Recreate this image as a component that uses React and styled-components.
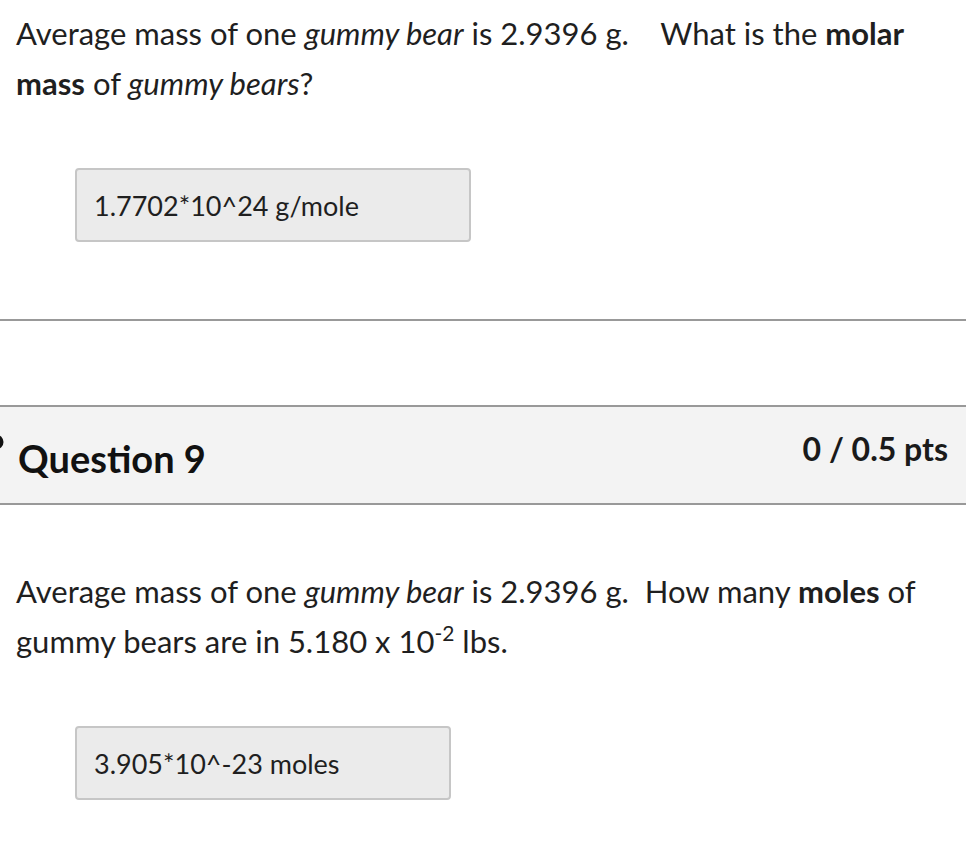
import React from 'react';
import styled, { createGlobalStyle } from 'styled-components';

const GlobalStyle = createGlobalStyle`
  html, body {
    margin: 0;
    padding: 0;
    background: #ffffff;
  }
  body {
    font-family: Lato, 'Noto Sans', sans-serif;
    color: #1f1f1f;
  }
`;

export default function App() {
  return (
    <Page>
      <GlobalStyle />
      <QuestionBody>
        <Prompt>
          Average mass of one <em>gummy bear</em> is 2.9396 g.&nbsp;&nbsp;&nbsp; What is the{' '}
          <strong>molar mass</strong> of <em>gummy bears</em>?
        </Prompt>
        <AnswerBox width={396}>1.7702*10^24 g/mole</AnswerBox>
      </QuestionBody>

      <Divider />

      <QuestionHeader>
        <FlagMark viewBox='0 0 16 16' aria-hidden='true'>
          <circle cx='8' cy='8' r='7.5' fill='#111' />
        </FlagMark>
        <QuestionTitle>Question 9</QuestionTitle>
        <Points>0 / 0.5 pts</Points>
      </QuestionHeader>

      <QuestionBody>
        <Prompt>
          Average mass of one <em>gummy bear</em> is 2.9396 g.&nbsp; How many{' '}
          <strong>moles</strong> of gummy bears are in 5.180 x 10<sup>-2</sup> lbs.
        </Prompt>
        <AnswerBox width={376}>3.905*10^-23 moles</AnswerBox>
      </QuestionBody>
    </Page>
  );
}

const Page = styled.div`
  width: 966px;
  overflow: hidden;
  padding-top: 8px;
`;

const QuestionBody = styled.section`
  display: flex;
  flex-direction: column;
  align-items: flex-start;
  padding: 0 16px;
`;

const Prompt = styled.p`
  margin: 0;
  font-size: 31px;
  line-height: 50px;
  color: #1f1f1f;
  & em {
    font-style: italic;
  }
  & strong {
    font-weight: 700;
  }
  & sup {
    font-size: 21px;
    line-height: 0;
    vertical-align: 12px;
  }
`;

const AnswerBox = styled.div`
  box-sizing: border-box;
  width: ${props => props.width}px;
  height: 74px;
  margin: 60px 0 0 59px;
  padding: 0 17px;
  display: flex;
  align-items: center;
  background: #ebebeb;
  border: 2px solid #c6c6c6;
  border-radius: 4px;
  font-size: 27px;
  color: #1f1f1f;
`;

const Divider = styled.hr`
  margin: 77px 0 0 0;
  height: 0;
  border: none;
  border-top: 2px solid #999999;
`;

const QuestionHeader = styled.header`
  position: relative;
  box-sizing: border-box;
  height: 100px;
  margin-top: 84px;
  margin-bottom: 61px;
  padding: 22px 18px 0 18px;
  display: flex;
  justify-content: space-between;
  align-items: flex-start;
  background: #f3f3f3;
  border-top: 2px solid #999999;
  border-bottom: 2px solid #999999;
`;

const FlagMark = styled.svg`
  position: absolute;
  left: -12px;
  top: 27px;
  width: 16px;
  height: 16px;
`;

const QuestionTitle = styled.h2`
  margin: 6px 0 0 0;
  font-size: 38px;
  font-weight: 700;
  line-height: normal;
  color: #111111;
`;

const Points = styled.span`
  font-size: 32px;
  font-weight: 700;
  line-height: normal;
  color: #1a1a1a;
`;
